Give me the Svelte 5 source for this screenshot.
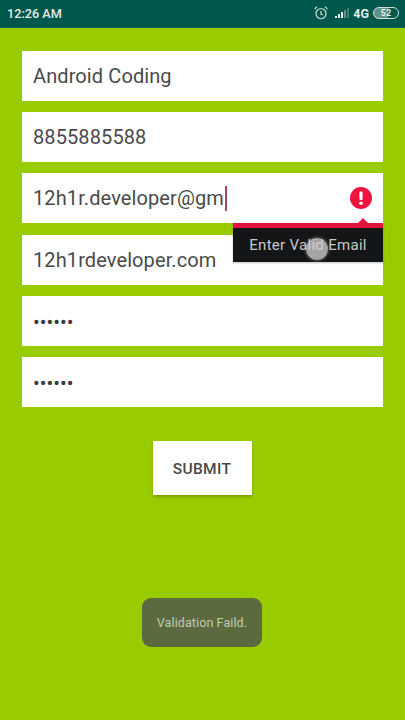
<script>
  const fields = [
    { text: 'Android Coding' },
    { text: '8855885588' },
    { text: '12h1r.developer@gm', active: true },
    { text: '12h1rdeveloper.com' },
    { text: '••••••', dots: true },
    { text: '••••••', dots: true }
  ];
</script>

<div class="screen">
  <header class="status">
    <span class="time">12:26 AM</span>
    <div class="indicators">
      <svg class="alarm" width="16" height="16" viewBox="0 0 16 16" fill="none" stroke="#b5cfc8" stroke-width="1.4">
        <circle cx="8" cy="8.6" r="5" />
        <path d="M8 6v3l1.8 1M1.6 4 4 1.8M14.4 4 12 1.8" />
      </svg>
      <svg class="signal" width="16" height="10" viewBox="0 0 16 10">
        <rect x="0" y="8" width="2" height="2" fill="#dfeae6" />
        <rect x="3" y="6" width="2" height="4" fill="#dfeae6" />
        <rect x="6" y="4" width="2" height="6" fill="#dfeae6" />
        <rect x="9" y="2" width="2" height="8" fill="#5f948a" />
        <rect x="12" y="0" width="2" height="10" fill="#3f8074" />
      </svg>
      <span class="net">4G</span>
      <span class="battery">52</span>
    </div>
  </header>

  <main class="form">
    {#each fields as f}
      <div class="field" class:dots={f.dots}>
        <span class="value">{f.text}</span>{#if f.active}<span class="caret"></span>{/if}
        {#if f.active}
          <svg class="err" width="24" height="24" viewBox="0 0 24 24">
            <circle cx="12" cy="12" r="11" fill="#f0133f" />
            <rect x="10.4" y="5.5" width="3.2" height="8.5" rx="1.2" fill="#fff" />
            <circle cx="12" cy="17.2" r="1.8" fill="#fff" />
          </svg>
          <div class="tip">
            <span class="arrow"></span>
            <span class="tip-text">Enter Valid Email</span>
          </div>
          <span class="touch"></span>
        {/if}
      </div>
    {/each}
    <button class="submit">SUBMIT</button>
  </main>

  <div class="toast">Validation Faild.</div>
</div>

<style>
  :global(body) {
    margin: 0;
    background: #99cc00;
  }
  .screen {
    position: relative;
    width: 405px;
    height: 720px;
    overflow: hidden;
    background: #99cc00;
    font-family: Roboto, "Liberation Sans", sans-serif;
  }
  .status {
    height: 28px;
    box-sizing: border-box;
    padding: 0 6px 1px 7px;
    background: #00574b;
    border-bottom: 1px solid #0a6a4a;
    display: flex;
    align-items: center;
    justify-content: space-between;
    color: #e3ece9;
  }
  .time {
    font-size: 12.7px;
    font-weight: 500;
  }
  .indicators {
    display: flex;
    align-items: center;
  }
  .alarm {
    margin-right: 6px;
  }
  .signal {
    margin-right: 2px;
  }
  .net {
    font-size: 12.5px;
    font-weight: 700;
    margin-right: 4px;
  }
  .battery {
    width: 26px;
    height: 12px;
    box-sizing: border-box;
    border: 1px solid #cfe0db;
    border-radius: 6px;
    background: linear-gradient(90deg, #5f9389 0 58%, transparent 58%);
    color: #e8f0ee;
    font-size: 9px;
    font-weight: 700;
    line-height: 10px;
    text-align: center;
  }
  .form {
    padding: 23px 22px 0;
    display: flex;
    flex-direction: column;
    gap: 11.2px;
  }
  .field {
    position: relative;
    height: 50px;
    box-sizing: border-box;
    padding: 0 11px;
    background: #fff;
    display: flex;
    align-items: center;
    color: #4a4a4a;
    font-size: 20px;
    letter-spacing: 0.1px;
  }
  .dots .value {
    letter-spacing: 0;
    color: #3a3a3a;
    position: relative;
    top: 1px;
  }
  .caret {
    width: 2px;
    height: 25px;
    background: #a8436b;
    margin-left: 1px;
  }
  .err {
    position: absolute;
    right: 10px;
    top: 13px;
  }
  .tip {
    position: absolute;
    right: 0;
    top: 50px;
    width: 150px;
    height: 39px;
    box-sizing: border-box;
    border-top: 5px solid #e0143c;
    background: #141517;
    z-index: 2;
    display: flex;
    align-items: center;
    justify-content: center;
    box-shadow: 0 1px 2px rgba(0, 0, 0, 0.25);
  }
  .arrow {
    position: absolute;
    right: 15px;
    top: -10px;
    border-left: 5px solid transparent;
    border-right: 5px solid transparent;
    border-bottom: 5px solid #e0143c;
  }
  .tip-text {
    color: #c9c9c9;
    font-size: 15px;
    letter-spacing: 0.3px;
  }
  .touch {
    position: absolute;
    left: 284px;
    top: 65px;
    width: 22px;
    height: 22px;
    border-radius: 50%;
    background: rgba(205, 205, 205, 0.78);
    box-shadow: 0 0 3px 1px rgba(200, 200, 200, 0.35);
    z-index: 3;
  }
  .submit {
    align-self: center;
    margin-top: 22.8px;
    width: 99px;
    height: 54px;
    margin-left: -1px;
    border: 0;
    border-radius: 1px;
    background: #fff;
    color: #484848;
    font-family: inherit;
    font-size: 15.5px;
    font-weight: 500;
    letter-spacing: 0.3px;
    box-shadow: 0 2px 3px rgba(0, 0, 0, 0.22);
    padding: 2px 0 0;
  }
  .toast {
    position: absolute;
    left: 142px;
    top: 598px;
    width: 120px;
    height: 49px;
    border-radius: 9px;
    background: #5c6b3f;
    color: #c3c9b6;
    font-size: 12.5px;
    letter-spacing: 0.1px;
    display: flex;
    align-items: center;
    justify-content: center;
  }
</style>
